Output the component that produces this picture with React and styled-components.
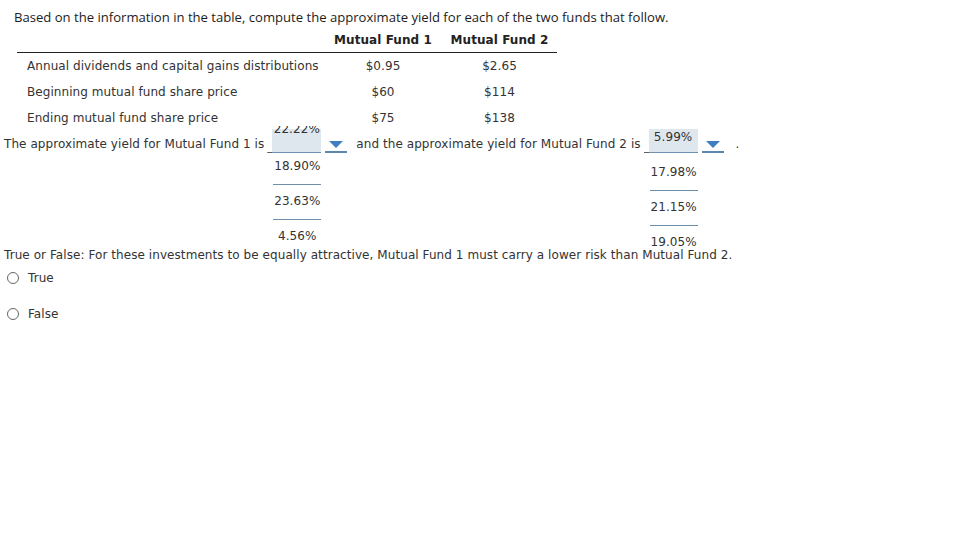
import React from "react";

// styled
import styled, { createGlobalStyle } from "styled-components";

const rows = [
  { label: "Annual dividends and capital gains distributions", a: "$0.95", b: "$2.65" },
  { label: "Beginning mutual fund share price", a: "$60", b: "$114" },
  { label: "Ending mutual fund share price", a: "$75", b: "$138" },
];

function Dropdown({ value, options, textShift, menuGap }) {
  return (
    <DropdownWrap>
      <Blank>_</Blank>
      <Field>
        <FieldText $shift={textShift}>{value}</FieldText>
        <Menu $gap={menuGap}>
          {options.map((o, i) => (
            <MenuItem key={o} $last={i === options.length - 1}>
              {o}
            </MenuItem>
          ))}
        </Menu>
      </Field>
      <Arrow>
        <svg width="14" height="7" viewBox="0 0 14 7">
          <polygon points="0,0 14,0 7,7" fill="#3f7fbf" />
        </svg>
      </Arrow>
    </DropdownWrap>
  );
}

export default function App() {
  return (
    <Page>
      <GlobalStyle />
      <Title>
        Based on the information in the table, compute the approximate yield for each of the two funds that follow.
      </Title>
      <Table>
        <HeadCell />
        <HeadCell $center>Mutual Fund 1</HeadCell>
        <HeadCell $center $right>Mutual Fund 2</HeadCell>
        {rows.map((r) => (
          <React.Fragment key={r.label}>
            <LabelCell>{r.label}</LabelCell>
            <ValueCell>{r.a}</ValueCell>
            <ValueCell $right>{r.b}</ValueCell>
          </React.Fragment>
        ))}
      </Table>
      <Sentence>
        <span>The approximate yield for Mutual Fund 1 is</span>
        <Dropdown value="22.22%" options={["18.90%", "23.63%", "4.56%"]} textShift={-8} menuGap={6} />
        <AfterText>and the approximate yield for Mutual Fund 2 is</AfterText>
        <Dropdown value="5.99%" options={["17.98%", "21.15%", "19.05%"]} textShift={0} menuGap={12} />
        <Dot>.</Dot>
      </Sentence>
      <Question>
        True or False: For these investments to be equally attractive, Mutual Fund 1 must carry a lower risk than Mutual Fund 2.
      </Question>
      <Radios>
        <RadioRow>
          <Circle />
          True
        </RadioRow>
        <RadioRow>
          <Circle />
          False
        </RadioRow>
      </Radios>
    </Page>
  );
}

const GlobalStyle = createGlobalStyle`
  body {
    margin: 0;
    background: #fff;
    font-family: "DejaVu Sans", Verdana, sans-serif;
    font-size: 12px;
    letter-spacing: 0.07px;
    color: #333;
  }
`;
const Page = styled.div`
  width: 960px;
  height: 540px;
  overflow: hidden;
  position: relative;
`;
const Title = styled.div`
  font-family: "Open Sans", "Segoe UI", sans-serif;
  font-size: 13.1px;
  letter-spacing: 0;
  color: #1c1c1c;
  padding: 8px 0 0 14px;
  height: 23px;
  line-height: 18px;
`;
const Table = styled.div`
  display: grid;
  grid-template-columns: 313px 106px 121px;
  margin-left: 17px;
  width: 540px;
`;
const HeadCell = styled.div`
  font-weight: bold;
  height: 21px;
  line-height: 19px;
  border-bottom: 1px solid #222;
  text-align: ${(p) => (p.$center ? "center" : "left")};
  padding-left: ${(p) => (p.$right ? "6px" : "0")};
  color: #222;
`;
const LabelCell = styled.div`
  height: 26px;
  line-height: 26px;
  padding-left: 10px;
  white-space: nowrap;
`;
const ValueCell = styled.div`
  height: 26px;
  line-height: 26px;
  text-align: center;
  padding-left: ${(p) => (p.$right ? "6px" : "0")};
`;
const Sentence = styled.div`
  display: flex;
  align-items: center;
  height: 26px;
  padding-left: 4px;
  white-space: nowrap;
  gap: 3px;
`;
const AfterText = styled.span`
  margin-left: 2px;
`;
const DropdownWrap = styled.span`
  display: inline-flex;
  align-items: flex-end;
  align-self: flex-end;
  height: 24px;
  margin: 0 4px 4px 0;
  position: relative;
`;
const Blank = styled.span`
  width: 5px;
  overflow: hidden;
  line-height: 14px;
  color: #555;
  font-size: 12px;
`;
const Field = styled.span`
  position: relative;
  width: 49px;
  height: 23px;
  background: #dfe7ee;
  border-bottom: 1px solid #6e92b2;
  text-align: center;
`;
const FieldText = styled.span`
  position: absolute;
  left: 0;
  right: 0;
  top: ${(p) => p.$shift}px;
  line-height: 16px;
  clip-path: inset(${(p) => (p.$shift < 0 ? "5px" : "0")} 0 0 0);
`;
const Menu = styled.div`
  position: absolute;
  left: 1px;
  top: calc(100% + ${(p) => p.$gap}px);
  width: 48px;
`;
const MenuItem = styled.div`
  height: 35px;
  line-height: 16px;
  box-sizing: border-box;
  text-align: center;
  position: relative;
  &::after {
    content: "";
    display: ${(p) => (p.$last ? "none" : "block")};
    position: absolute;
    left: 0;
    right: 0;
    top: 26px;
    border-top: 1px solid #6f8fab;
  }
`;
const Arrow = styled.span`
  display: flex;
  align-items: center;
  justify-content: center;
  width: 22px;
  height: 14px;
  margin-left: 4px;
  border-bottom: 2px solid #5b86ad;
  svg {
    display: block;
  }
`;
const Dot = styled.span`
  margin-left: 5px;
`;
const Question = styled.div`
  margin-top: 90px;
  padding-left: 4px;
  line-height: 16px;
  white-space: nowrap;
  position: relative;
`;
const Radios = styled.div`
  padding: 7px 0 0 7px;
`;
const RadioRow = styled.label`
  display: flex;
  align-items: flex-start;
  gap: 9px;
  height: 36px;
  line-height: 16px;
`;
const Circle = styled.span`
  width: 10px;
  height: 10px;
  border: 1px solid #666;
  border-radius: 50%;
  margin-top: 2px;
  flex: none;
`;
